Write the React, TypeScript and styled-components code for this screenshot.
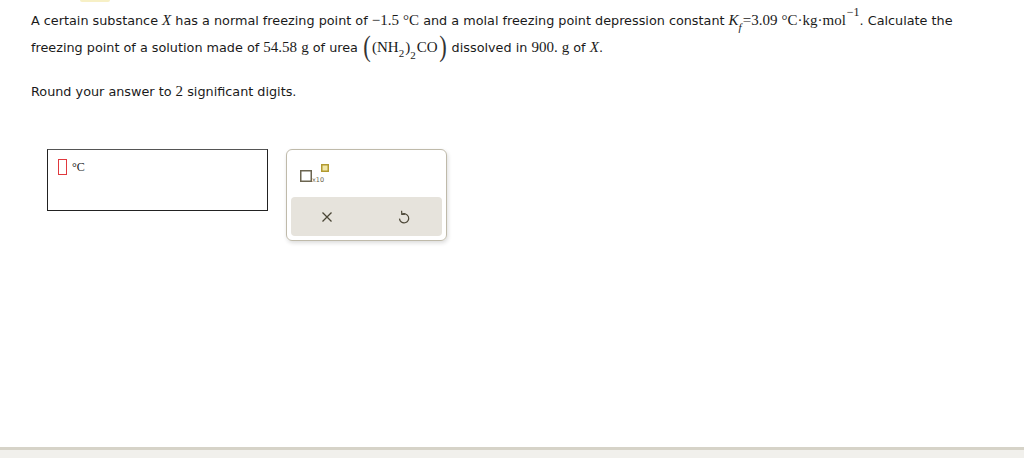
import React from "react";
import styled, { createGlobalStyle } from "styled-components";

const Global = createGlobalStyle`
  html, body { margin: 0; padding: 0; background: #fff; }
  body { font-family: "DejaVu Sans", Verdana, sans-serif; color: #1a1a1a; }
`;

const Page = styled.div`
  width: 1024px;
  height: 458px;
  display: flex;
  flex-direction: column;
  position: relative;
  overflow: hidden;
`;

const TopTab = styled.div`
  position: absolute;
  left: 80px;
  top: 0;
  width: 30px;
  height: 2px;
  background: #f7f0c6;
  border-radius: 0 0 3px 3px;
`;

const Content = styled.div`
  flex: 1;
  padding: 9px 0 0 31px;
`;

const Para = styled.p<{ $lh?: number; $mb?: number }>`
  margin: 0 0 ${(p) => p.$mb ?? 0}px;
  font-size: 12.8px;
  line-height: ${(p) => p.$lh ?? 22}px;
  white-space: nowrap;
`;

const M = styled.span<{ $i?: boolean; $size?: number }>`
  font-family: "Liberation Serif", "Times New Roman", serif;
  font-size: ${(p) => p.$size ?? 15}px;
  font-style: ${(p) => (p.$i ? "italic" : "normal")};
`;

const Sub = styled.span<{ $drop?: number }>`
  display: inline-block;
  vertical-align: ${(p) => -(p.$drop ?? 5)}px;
  line-height: 0;
  margin-right: 1px;
`;

const Sup = styled.span`
  display: inline-block;
  vertical-align: 9px;
  line-height: 0;
  margin-left: 1px;
`;

const Paren = styled.span`
  font-family: "Liberation Serif", serif;
  font-size: 30px;
  display: inline-block;
  transform: scaleX(0.75);
  vertical-align: -4px;
  line-height: 0;
  color: #333;
`;

const Row = styled.div`
  display: flex;
  gap: 18px;
  align-items: flex-start;
  margin: 46px 0 0 16px;
`;

const AnswerBox = styled.div`
  width: 221px;
  height: 62px;
  box-sizing: border-box;
  border: 1px solid #222;
  border-top-color: #555;
  display: flex;
  align-items: flex-start;
  gap: 5px;
  padding: 9px 0 0 10px;
`;

const Slot = styled.div`
  width: 7px;
  height: 14px;
  border: 1px solid #e0393e;
`;

const Unit = styled.span`
  font-family: "Liberation Serif", serif;
  font-size: 12px;
  line-height: 17px;
`;

const Panel = styled.div`
  width: 161px;
  height: 92px;
  box-sizing: border-box;
  border: 1px solid #bfbaaa;
  border-radius: 6px;
  box-shadow: 1px 2px 4px rgba(0, 0, 0, 0.14);
  padding: 0 4px 4px;
  display: flex;
  flex-direction: column;
`;

const Tools = styled.div`
  height: 47px;
  display: flex;
  align-items: flex-start;
  padding: 13px 0 0 8px;
  box-sizing: border-box;
`;

const Buttons = styled.div`
  flex: 1;
  background: #e6e3dc;
  border-radius: 4px;
  display: flex;
  justify-content: space-between;
  align-items: center;
  padding: 0 30px 0 28px;
`;

const IconBtn = styled.button`
  border: none;
  background: none;
  padding: 0;
  width: 16px;
  height: 16px;
  display: flex;
  align-items: center;
  justify-content: center;
  color: #4a4535;
`;

const Bottom = styled.div`
  height: 8px;
  border-top: 3px solid #d6d3c8;
  background: #f1f0ec;
`;

function SciIcon() {
  return (
    <svg width="32" height="20" viewBox="0 0 32 20">
      <rect x="1.75" y="7.75" width="10.5" height="10.5" fill="none" stroke="#6b6550" strokeWidth="1.5" />
      <text x="13" y="18.5" fontSize="6.5" fill="#6b6550" fontFamily="DejaVu Sans, sans-serif">x10</text>
      <rect x="22.75" y="1.75" width="6.5" height="6.5" fill="#f1e7a8" stroke="#b29a30" strokeWidth="1.5" />
    </svg>
  );
}

export default function App() {
  return (
    <Page>
      <Global />
      <TopTab />
      <Content>
        <Para $lh={22}>
          A certain substance <M $i>X</M> has a normal freezing point of <M>−1.5</M> <M>°C</M> and a molal freezing point
          depression constant <M $i>K</M>
          <Sub $drop={6}>
            <M $i $size={11}>f</M>
          </Sub>
          <M>=3.09</M> <M>°C·kg·mol</M>
          <Sup>
            <M $size={12}>−1</M>
          </Sup>
          . Calculate the
        </Para>
        <Para $lh={30} $mb={17}>
          freezing point of a solution made of <M>54.58</M> <M>g</M> of urea{" "}
          <Paren>(</Paren>
          <M>(NH</M>
          <Sub>
            <M $size={11}>2</M>
          </Sub>
          <M>)</M>
          <Sub $drop={7}>
            <M $size={11}>2</M>
          </Sub>
          <M>CO</M>
          <Paren>)</Paren> dissolved in <M>900.</M> <M>g</M> of <M $i>X</M>.
        </Para>
        <Para>
          Round your answer to <M>2</M> significant digits.
        </Para>
        <Row>
          <AnswerBox>
            <Slot />
            <Unit>°C</Unit>
          </AnswerBox>
          <Panel>
            <Tools>
              <SciIcon />
            </Tools>
            <Buttons>
              <IconBtn aria-label="clear">
                <svg width="12" height="12" viewBox="0 0 12 12">
                  <path d="M1.5 1.5 L10.5 10.5 M10.5 1.5 L1.5 10.5" stroke="currentColor" strokeWidth="1.3" />
                </svg>
              </IconBtn>
              <IconBtn aria-label="undo">
                <svg width="12" height="14" viewBox="0 0 12 14">
                  <path d="M3.8 4.3 A4.6 4.6 0 1 1 1.5 8.6" fill="none" stroke="currentColor" strokeWidth="1.2" />
                  <path d="M3.6 0.8 L3.8 4.3 L7.2 4.1" fill="none" stroke="currentColor" strokeWidth="1.2" />
                </svg>
              </IconBtn>
            </Buttons>
          </Panel>
        </Row>
      </Content>
      <Bottom />
    </Page>
  );
}
